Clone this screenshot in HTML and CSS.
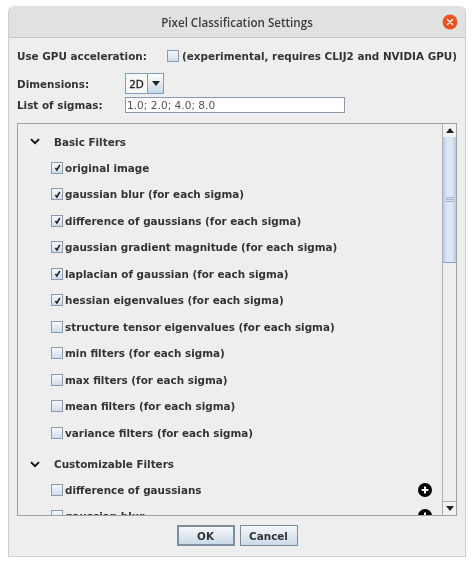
FILE: index.html
```html
<!DOCTYPE html>
<html lang="en">
<head>
<meta charset="utf-8">
<title>Pixel Classification Settings</title>
<link rel="stylesheet" href="styles.css">
</head>
<body>
<div class="window">
  <header class="titlebar">
    <span class="title">Pixel Classification Settings</span>
    <span class="close"><svg viewBox="0 0 16 16" width="16" height="16"><circle cx="8" cy="8" r="7.5" fill="#e95420"/><path d="M5.4 5.4l5.2 5.2M10.6 5.4l-5.2 5.2" stroke="#fff" stroke-width="1.4" stroke-linecap="round"/></svg></span>
  </header>
  <div class="content">
    <div class="form-row gpu-row">
      <span class="label gpu-label">Use GPU acceleration:</span>
      <span class="check"></span>
      <span class="label">(experimental, requires CLIJ2 and NVIDIA GPU)</span>
    </div>
    <div class="form-row dim-row">
      <span class="label field-label">Dimensions:</span>
      <span class="combo"><span class="combo-value">2D</span><span class="combo-arrow"><svg viewBox="0 0 8 5" width="8" height="5"><path d="M0 0h8L4 5z" fill="#222"/></svg></span></span>
    </div>
    <div class="form-row sigma-row">
      <span class="label field-label">List of sigmas:</span>
      <span class="textfield">1.0; 2.0; 4.0; 8.0</span>
    </div>
    <div class="scrollpane">
      <div class="list">
        <div class="row head head-1"><svg class="chev" viewBox="0 0 10 7" width="10" height="7"><path d="M1 1.2l4 4 4-4" fill="none" stroke="#111" stroke-width="1.9"/></svg><span class="label">Basic Filters</span></div>
        <div class="row"><span class="check on"><svg viewBox="0 0 9 9" width="9" height="9"><path d="M2.4 4.8l1.5 2.2L6.8 2" fill="none" stroke="#222" stroke-width="1.5"/></svg></span><span class="label">original image</span></div>
        <div class="row"><span class="check on"><svg viewBox="0 0 9 9" width="9" height="9"><path d="M2.4 4.8l1.5 2.2L6.8 2" fill="none" stroke="#222" stroke-width="1.5"/></svg></span><span class="label">gaussian blur (for each sigma)</span></div>
        <div class="row"><span class="check on"><svg viewBox="0 0 9 9" width="9" height="9"><path d="M2.4 4.8l1.5 2.2L6.8 2" fill="none" stroke="#222" stroke-width="1.5"/></svg></span><span class="label">difference of gaussians (for each sigma)</span></div>
        <div class="row"><span class="check on"><svg viewBox="0 0 9 9" width="9" height="9"><path d="M2.4 4.8l1.5 2.2L6.8 2" fill="none" stroke="#222" stroke-width="1.5"/></svg></span><span class="label">gaussian gradient magnitude (for each sigma)</span></div>
        <div class="row"><span class="check on"><svg viewBox="0 0 9 9" width="9" height="9"><path d="M2.4 4.8l1.5 2.2L6.8 2" fill="none" stroke="#222" stroke-width="1.5"/></svg></span><span class="label">laplacian of gaussian (for each sigma)</span></div>
        <div class="row"><span class="check on"><svg viewBox="0 0 9 9" width="9" height="9"><path d="M2.4 4.8l1.5 2.2L6.8 2" fill="none" stroke="#222" stroke-width="1.5"/></svg></span><span class="label">hessian eigenvalues (for each sigma)</span></div>
        <div class="row"><span class="check"></span><span class="label">structure tensor eigenvalues (for each sigma)</span></div>
        <div class="row"><span class="check"></span><span class="label">min filters (for each sigma)</span></div>
        <div class="row"><span class="check"></span><span class="label">max filters (for each sigma)</span></div>
        <div class="row"><span class="check"></span><span class="label">mean filters (for each sigma)</span></div>
        <div class="row"><span class="check"></span><span class="label">variance filters (for each sigma)</span></div>
        <div class="row head head-2"><svg class="chev" viewBox="0 0 10 7" width="10" height="7"><path d="M1 1.2l4 4 4-4" fill="none" stroke="#111" stroke-width="1.9"/></svg><span class="label">Customizable Filters</span></div>
        <div class="row"><span class="check"></span><span class="label">difference of gaussians</span><svg class="plus" viewBox="0 0 14 14" width="14" height="14"><circle cx="7" cy="7" r="7" fill="#000"/><path d="M7 3.6v6.8M3.6 7h6.8" stroke="#fff" stroke-width="2"/></svg></div>
        <div class="row"><span class="check"></span><span class="label">gaussian blur</span><svg class="plus" viewBox="0 0 14 14" width="14" height="14"><circle cx="7" cy="7" r="7" fill="#000"/><path d="M7 3.6v6.8M3.6 7h6.8" stroke="#fff" stroke-width="2"/></svg></div>
      </div>
      <div class="scrollbar">
        <span class="sb-btn"><svg viewBox="0 0 8 5" width="8" height="5"><path d="M0 5h8L4 0z" fill="#222"/></svg></span>
        <div class="track">
          <div class="thumb"><span class="grip"></span></div>
        </div>
        <span class="sb-btn sb-btn-end"><svg viewBox="0 0 8 5" width="8" height="5"><path d="M0 0h8L4 5z" fill="#222"/></svg></span>
      </div>
    </div>
    <div class="actions">
      <button class="btn ok" type="button">OK</button>
      <button class="btn" type="button">Cancel</button>
    </div>
  </div>
</div>
</body>
</html>
```
FILE: styles.css
```css
html, body { margin: 0; padding: 0; background: #fff; }
body { width: 474px; height: 565px; padding: 6px 8px 8px; box-sizing: border-box; font-family: "DejaVu Sans", sans-serif; color: #333; overflow: hidden; }
.window { height: 551px; display: flex; flex-direction: column; background: #eeeeee; border: 1px solid #cfcfcf; border-top-color: #dedede; border-radius: 6px 6px 0 0; box-sizing: border-box; filter: blur(0.3px); }
.titlebar { height: 30px; flex: none; display: flex; align-items: center; justify-content: center; position: relative; background: #e1e1e1; border-bottom: 1px solid #c4c4c4; border-radius: 6px 6px 0 0; }
.title { font-family: "Open Sans", sans-serif; font-weight: 600; font-size: 11.6px; color: #3c3c3c; }
.close { position: absolute; right: 7px; top: 7px; width: 16px; height: 16px; display: flex; }
.content { flex: 1; min-height: 0; display: flex; flex-direction: column; padding: 0 8px; }
.label { font-size: 10.4px; font-weight: 700; color: #333; white-space: nowrap; }
.form-row { display: flex; align-items: center; }
.gpu-row { margin-top: 9px; height: 18px; }
.gpu-label { width: 150px; flex: none; }
.gpu-row .check { margin-right: 3px; }
.dim-row { margin-top: 8px; height: 21px; }
.sigma-row { margin-top: 3px; height: 16px; }
.field-label { width: 108px; flex: none; }
.check { width: 10px; height: 10px; flex: none; display: flex; align-items: center; justify-content: center; border: 1px solid #8a9bb0; background: linear-gradient(#f5f8fb, #cfdcea); }
.combo { display: flex; height: 21px; border: 1px solid #7f9db9; box-sizing: border-box; }
.combo-value { width: 21px; display: flex; align-items: center; justify-content: center; font-size: 10.4px; color: #222; background: #f7f7f7; border-right: 1px solid #7f9db9; -webkit-text-stroke: 0.3px #222; }
.combo-arrow { width: 15px; display: flex; align-items: center; justify-content: center; background: linear-gradient(#fff, #c6d6e6); }
.textfield { width: 220px; height: 16px; box-sizing: border-box; border: 1px solid #8c99a6; background: #fff; font-size: 10.6px; line-height: 14px; padding-left: 1px; color: #555; }
.scrollpane { margin-top: 10px; height: 393px; flex: none; display: flex; border: 1px solid #9aa3ac; box-sizing: border-box; overflow: hidden; }
.list { flex: 1; min-width: 0; overflow: hidden; padding-top: 5px; }
.row { height: 26.5px; display: flex; align-items: center; padding-left: 33px; }
.row .check { margin-right: 2px; }
.head { padding-left: 12px; }
.head-1 { height: 25.5px; }
.chev { margin-right: 14px; flex: none; }
.head-2 { margin-top: 6px; height: 24.5px; }
.plus { margin-left: auto; margin-right: 10px; flex: none; }
.scrollbar { width: 13px; flex: none; display: flex; flex-direction: column; border-left: 1px solid #a9b1ba; }
.sb-btn { height: 13px; flex: none; display: flex; align-items: center; justify-content: center; background: #f2f2f2; }
.sb-btn-end { border-top: 1px solid #a9b1ba; }
.track { flex: 1; min-height: 0; background: #eeeeee; }
.thumb { height: 126px; display: flex; align-items: center; justify-content: center; background: linear-gradient(90deg, #b5c8e0, #dce7f3 30%, #dce7f3 70%, #b5c8e0); border-bottom: 1px solid #8fa5c2; box-sizing: border-box; }
.grip { width: 8px; height: 5px; background: repeating-linear-gradient(#a3b5cf 0 1px, #d3deea 1px 2px); }
.actions { flex: 1; display: flex; justify-content: center; align-items: center; gap: 5px; padding-bottom: 1px; }
.btn { width: 58px; height: 21px; box-sizing: border-box; padding: 0; border: 1px solid #7a8a99; background: linear-gradient(#f4f7fa, #ccdae8); font-family: "DejaVu Sans", sans-serif; font-size: 10.4px; font-weight: 700; color: #333; }
.ok { border-width: 2px; border-color: #7d8ea0; }
```
